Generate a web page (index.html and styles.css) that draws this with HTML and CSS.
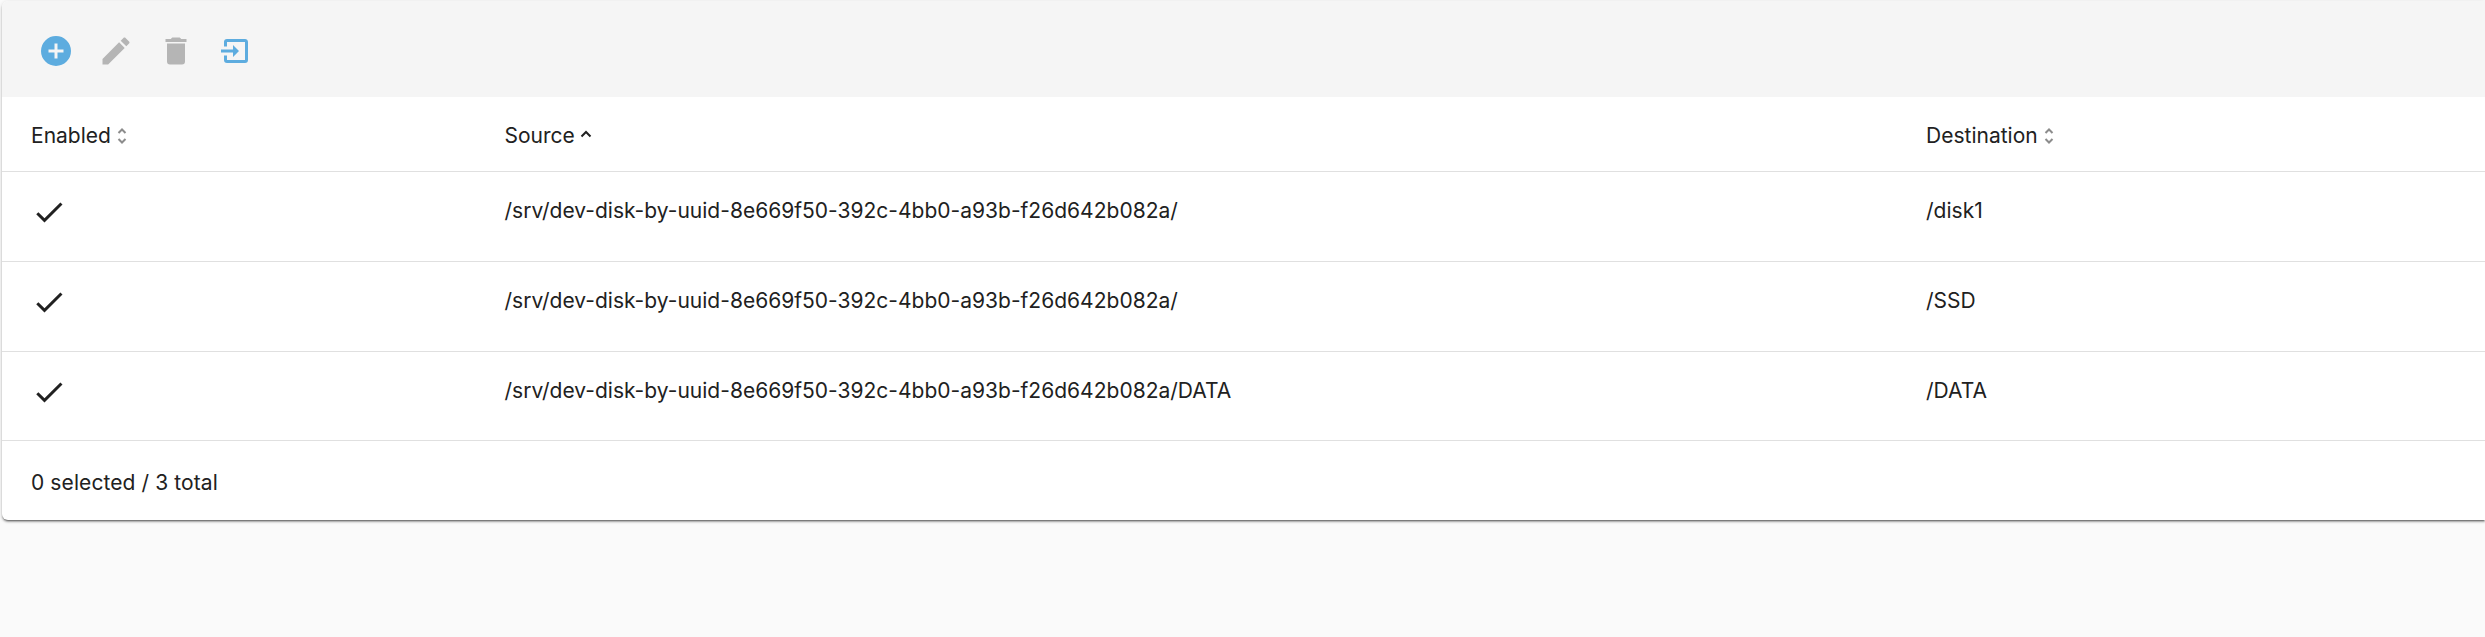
FILE: index.html
```
<!DOCTYPE html>
<html lang="en">
	<head>
		<meta charset="UTF-8">
		<title>Shared folders</title>
		<link rel="stylesheet" href="styles.css">
	</head>
	<body>
		<div class="card">
			<div class="toolbar">
				<svg class="icon" viewBox="0 0 24 24"><path d="M17,13H13V17H11V13H7V11H11V7H13V11H17M12,2A10,10 0 0,0 2,12A10,10 0 0,0 12,22A10,10 0 0,0 22,12A10,10 0 0,0 12,2Z"/></svg>
				<svg class="icon disabled" viewBox="0 0 24 24"><path d="M20.71,7.04C21.1,6.65 21.1,6 20.71,5.63L18.37,3.29C18,2.9 17.35,2.9 16.96,3.29L15.12,5.12L18.87,8.87M3,17.25V21H6.75L17.81,9.93L14.06,6.18L3,17.25Z"/></svg>
				<svg class="icon disabled" viewBox="0 0 24 24"><path d="M19,4H15.5L14.5,3H9.5L8.5,4H5V6H19M6,19A2,2 0 0,0 8,21H16A2,2 0 0,0 18,19V7H6V19Z"/></svg>
				<svg class="icon" viewBox="0 0 24 24"><path d="M14,12L10,8V11H2V13H10V16M20,18V6C20,4.89 19.1,4 18,4H6A2,2 0 0,0 4,6V9H6V6H18V18H6V15H4V18A2,2 0 0,0 6,20H18A2,2 0 0,0 20,18Z"/></svg>
			</div>
			<div class="row head">
				<div class="cell">Enabled<svg class="sort" viewBox="0 0 10 16"><path d="M1.5,5L5,1.5L8.5,5M1.5,11L5,14.5L8.5,11"/></svg></div>
				<div class="cell">Source<svg class="sort asc" viewBox="0 0 12 16"><path d="M1.5,8.5L6,4L10.5,8.5"/></svg></div>
				<div class="cell">Destination<svg class="sort" viewBox="0 0 10 16"><path d="M1.5,5L5,1.5L8.5,5M1.5,11L5,14.5L8.5,11"/></svg></div>
			</div>
			<div class="row">
				<div class="cell"><svg class="check" viewBox="0 0 24 24"><path d="M21,7L9,19L3.5,13.5L4.91,12.09L9,16.17L19.59,5.59L21,7Z"/></svg></div>
				<div class="cell">/srv/dev-disk-by-uuid-8e669f50-392c-4bb0-a93b-f26d642b082a/</div>
				<div class="cell">/disk1</div>
			</div>
			<div class="row">
				<div class="cell"><svg class="check" viewBox="0 0 24 24"><path d="M21,7L9,19L3.5,13.5L4.91,12.09L9,16.17L19.59,5.59L21,7Z"/></svg></div>
				<div class="cell">/srv/dev-disk-by-uuid-8e669f50-392c-4bb0-a93b-f26d642b082a/</div>
				<div class="cell">/SSD</div>
			</div>
			<div class="row">
				<div class="cell"><svg class="check" viewBox="0 0 24 24"><path d="M21,7L9,19L3.5,13.5L4.91,12.09L9,16.17L19.59,5.59L21,7Z"/></svg></div>
				<div class="cell">/srv/dev-disk-by-uuid-8e669f50-392c-4bb0-a93b-f26d642b082a/DATA</div>
				<div class="cell">/DATA</div>
			</div>
			<div class="footer">0 selected / 3 total</div>
		</div>
	</body>
</html>
```

FILE: styles.css
```
*{
	margin: 0;
	padding: 0;
	box-sizing: border-box;
}
body{
	min-height: 637px;
	padding: 1px 0 0 2px;
	background: #fafafa;
	color: #212121;
	font: 21px/30px Inter, sans-serif;
}
.card{
	height: 519px;
	background: #fff;
	border-radius: 6px 0 0 6px;
	box-shadow: 0 2px 1px -1px rgba(0,0,0,.3), 0 2px 2px 0 rgba(0,0,0,.28), 0 1px 4px 0 rgba(0,0,0,.14);
}
.toolbar{
	display: flex;
	gap: 24px;
	height: 96px;
	padding: 32px 36px 0;
	background: #f5f5f5;
	border-radius: 6px 0 0 0;
}
.icon{
	width: 36px;
	height: 36px;
	fill: #5dacdf;
}
.icon.disabled{
	fill: #b5b5b5;
}
.row{
	display: grid;
	grid-template-columns: 473.5px 1421.5px 1fr;
	height: 90px;
	border-bottom: 1px solid #e0e0e0;
}
.row:nth-child(5){
	height: 89px;
}
.row.head{
	height: 75px;
}
.cell{
	padding: 24px 0 0 29px;
	white-space: nowrap;
	letter-spacing: .01px;
}
.head .cell{
	display: flex;
}
.check{
	display: block;
	width: 36px;
	height: 36px;
	margin-top: -2px;
	fill: #212121;
}
.sort{
	width: 10px;
	height: 16px;
	margin: 7px 0 0 6px;
	fill: none;
	stroke: #8c8c8c;
	stroke-width: 2;
}
.sort.asc{
	width: 12px;
	margin-left: 5px;
	stroke: #212121;
}
.footer{
	padding: 27px 29px 0;
	letter-spacing: .1px;
}
```
